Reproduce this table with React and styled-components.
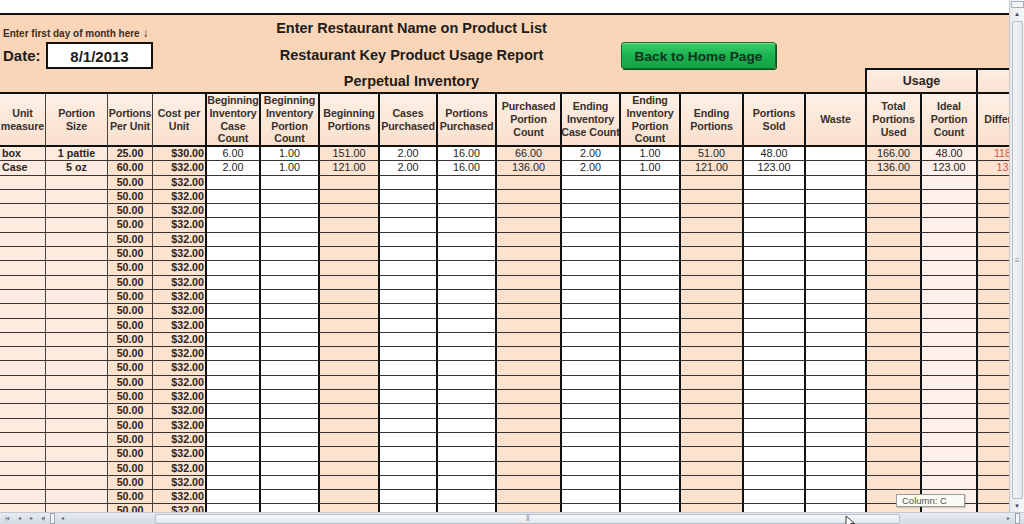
import React from "react";
import styled, { createGlobalStyle } from "styled-components";

const GlobalStyle = createGlobalStyle`
  html, body {
    margin: 0;
    padding: 0;
    background: #fff;
    overflow: hidden;
  }
  body {
    font-family: "Liberation Sans", Arial, sans-serif;
  }
`;

// column widths follow the sheet grid, last one runs under the scrollbar
const columns = [
  { w: 46, label: "Unit\nmeasure", tone: "light", edge: "thin", align: "left", bold: true },
  { w: 62, label: "Portion\nSize", tone: "light", edge: "thin", align: "center", bold: true },
  { w: 45, label: "Portions\nPer Unit", tone: "peach", edge: "thin", align: "center", bold: true },
  { w: 54, label: "Cost per\nUnit", tone: "peach", edge: "thick", align: "right", bold: true },
  { w: 54, label: "Beginning\nInventory\nCase\nCount", tone: "white", edge: "thick" },
  { w: 59, label: "Beginning\nInventory\nPortion\nCount", tone: "white", edge: "thick" },
  { w: 60, label: "Beginning\nPortions", tone: "peach", edge: "thick" },
  { w: 58, label: "Cases\nPurchased", tone: "white", edge: "thick" },
  { w: 59, label: "Portions\nPurchased", tone: "white", edge: "thick" },
  { w: 65, label: "Purchased\nPortion\nCount", tone: "peach", edge: "thick" },
  { w: 59, label: "Ending\nInventory\nCase Count", tone: "white", edge: "thick" },
  { w: 60, label: "Ending\nInventory\nPortion\nCount", tone: "white", edge: "thick" },
  { w: 63, label: "Ending\nPortions", tone: "peach", edge: "thick" },
  { w: 62, label: "Portions\nSold", tone: "white", edge: "thick" },
  { w: 61, label: "Waste", tone: "white", edge: "thick" },
  { w: 55, label: "Total\nPortions\nUsed", tone: "peach", edge: "thick" },
  { w: 56, label: "Ideal\nPortion\nCount", tone: "pink", edge: "thick" },
  { w: 64, label: "Difference", tone: "peach", edge: "none", red: true },
];

const template = columns.map((c) => `${c.w}px`).join(" ");

const rows = [
  ["box", "1 pattie", "25.00", "$30.00", "6.00", "1.00", "151.00", "2.00", "16.00", "66.00", "2.00", "1.00", "51.00", "48.00", "", "166.00", "48.00", "118.00"],
  ["Case", "5 oz", "60.00", "$32.00", "2.00", "1.00", "121.00", "2.00", "16.00", "136.00", "2.00", "1.00", "121.00", "123.00", "", "136.00", "123.00", "13.00"],
  ...Array.from({ length: 24 }, () => ["", "", "50.00", "$32.00", ...Array(14).fill("")]),
];

const tones = {
  light: "#fcebde",
  peach: "#fbe3d0",
  white: "#ffffff",
  pink: "#fdefe9",
};

const edges = {
  thin: "1px solid #4a4440",
  thick: "2px solid #111",
  none: "none",
};

export default function App() {
  return (
    <Window>
      <GlobalStyle />
      <Main>
        <Sheet>
          <TopStrip />
          <TitleArea>
            <Hint>
              Enter first day of month here <HintArrow>↓</HintArrow>
            </Hint>
            <Title $row={1}>Enter Restaurant Name on Product List</Title>
            <DateLabel>Date:</DateLabel>
            <DateBox>8/1/2013</DateBox>
            <Title $row={2}>Restaurant Key Product Usage Report</Title>
            <HomeButton>Back to Home Page</HomeButton>
            <Title $row={3}>Perpetual Inventory</Title>
            <UsageBox>Usage</UsageBox>
            <SpareBox />
          </TitleArea>
          <Table>
            {columns.map((c, i) => (
              <HeadCell key={i} $edge={c.edge}>
                {c.label}
              </HeadCell>
            ))}
            {rows.map((row, r) =>
              row.map((v, i) => (
                <Cell
                  key={`${r}-${i}`}
                  $tone={columns[i].tone}
                  $edge={columns[i].edge}
                  $align={columns[i].align || "center"}
                  $bold={columns[i].bold}
                  $red={columns[i].red}
                >
                  {v}
                </Cell>
              ))
            )}
          </Table>
        </Sheet>
        <VScroll>
          <SplitBox />
          <ArrowBtn>▲</ArrowBtn>
          <VThumb>
            <Grip>≡</Grip>
          </VThumb>
          <ArrowBtn>▼</ArrowBtn>
        </VScroll>
      </Main>
      <HBar>
        <NavGroup>
          <NavGlyph>|◂</NavGlyph>
          <NavGlyph>◂</NavGlyph>
          <NavGlyph>▸</NavGlyph>
          <NavGlyph>▸|</NavGlyph>
        </NavGroup>
        <TabSplit />
        <NavGlyph>◂</NavGlyph>
        <TabSpace />
        <HThumb>
          <Grip>⦀</Grip>
        </HThumb>
        <HRest />
        <NavGlyph>▸</NavGlyph>
        <TabSplit />
      </HBar>
      <Tooltip>Column: C</Tooltip>
      <Cursor width="12" height="12" viewBox="0 0 12 12">
        <path d="M1 0 L1 11 L4 8 L6.5 12 L8 11.3 L5.6 7.4 L9.5 7.4 Z" fill="#fff" stroke="#222" strokeWidth="0.9" />
      </Cursor>
    </Window>
  );
}

const Window = styled.div`
  position: relative;
  width: 1024px;
  height: 524px;
  overflow: hidden;
  display: flex;
  flex-direction: column;
  background: #fff;
`;

const Main = styled.div`
  display: flex;
  height: 512px;
`;

const Sheet = styled.div`
  width: 1009px;
  overflow: hidden;
  display: flex;
  flex-direction: column;
`;

const TopStrip = styled.div`
  height: 13px;
  flex-shrink: 0;
  background: #fff;
  border-bottom: 2px solid #111;
`;

const TitleArea = styled.div`
  display: grid;
  grid-template-columns: ${template};
  grid-template-rows: 26px 27px 24px;
  flex-shrink: 0;
  background: #fad5b8;
  color: #211c19;
`;

const Hint = styled.div`
  grid-column: 1 / 5;
  grid-row: 1;
  align-self: end;
  padding: 0 0 2px 3px;
  font-size: 10px;
  font-weight: 700;
  color: #3a2c24;
  white-space: nowrap;
`;

const HintArrow = styled.span`
  font-size: 12px;
  line-height: 10px;
`;

const Title = styled.div`
  grid-column: 6 / 11;
  grid-row: ${(p) => p.$row};
  align-self: center;
  justify-self: center;
  white-space: nowrap;
  font-size: 14.5px;
  font-weight: 700;
  margin-top: ${(p) => (p.$row === 3 ? "2px" : "0")};
`;

const DateLabel = styled.div`
  grid-column: 1;
  grid-row: 2;
  align-self: center;
  padding: 2px 0 0 3px;
  font-size: 15px;
  font-weight: 700;
`;

const DateBox = styled.div`
  grid-column: 2 / 4;
  grid-row: 2;
  box-sizing: border-box;
  margin-top: 1px;
  height: 27px;
  padding-top: 1px;
  border: 2px solid #111;
  background: #fff;
  display: flex;
  align-items: center;
  justify-content: center;
  font-size: 15px;
  font-weight: 700;
`;

const HomeButton = styled.button`
  grid-column: 12 / 15;
  grid-row: 2;
  justify-self: start;
  box-sizing: border-box;
  margin-top: 1px;
  width: 155px;
  height: 27px;
  padding: 1px 0 0;
  border: 1px solid #0c6b2d;
  border-radius: 3px;
  background: linear-gradient(180deg, #3ccf6a 0%, #1db452 45%, #13a245 100%);
  box-shadow: 1px 1px 0 #0b5424, inset 0 1px 0 rgba(255, 255, 255, 0.35);
  font-family: "Liberation Sans", Arial, sans-serif;
  font-size: 13.7px;
  font-weight: 700;
  color: #10331c;
  cursor: pointer;
`;

const UsageBox = styled.div`
  grid-column: 16 / 18;
  grid-row: 3;
  margin-left: -2px;
  border: 2px solid #111;
  border-bottom: none;
  background: linear-gradient(180deg, #fdeee3 0%, #fbe3d2 100%);
  display: flex;
  align-items: center;
  justify-content: center;
  font-size: 12.5px;
  font-weight: 700;
  color: #2a2522;
`;

const SpareBox = styled.div`
  grid-column: 18;
  grid-row: 3;
  border-top: 2px solid #111;
  background: linear-gradient(180deg, #fdeee3 0%, #fbe3d2 100%);
`;

const Table = styled.div`
  display: grid;
  grid-template-columns: ${template};
  grid-auto-rows: 14.3px;
  grid-template-rows: 53px;
  border-top: 2px solid #111;
  width: max-content;
`;

const HeadCell = styled.div`
  box-sizing: border-box;
  display: flex;
  align-items: center;
  justify-content: center;
  text-align: center;
  white-space: pre;
  font-size: 10.7px;
  line-height: 12.7px;
  font-weight: 700;
  letter-spacing: -0.1px;
  color: #38302c;
  background: linear-gradient(180deg, #fdf0e6 0%, #fae0cc 100%);
  border-right: ${(p) => edges[p.$edge]};
  border-bottom: 2px solid #111;
  overflow: hidden;
`;

const Cell = styled.div`
  box-sizing: border-box;
  background: ${(p) => tones[p.$tone]};
  border-right: ${(p) => edges[p.$edge]};
  border-bottom: 1px solid #3a3532;
  text-align: ${(p) => p.$align};
  padding: ${(p) => (p.$align === "left" ? "0 0 0 2px" : p.$align === "right" ? "0 1px 0 0" : "0")};
  font-size: ${(p) => (p.$bold ? "10.7px" : "10.8px")};
  font-weight: ${(p) => (p.$bold ? 700 : 400)};
  line-height: 13.3px;
  color: ${(p) => (p.$red ? "#d4544c" : p.$bold ? "#2b2420" : "#262626")};
  white-space: nowrap;
  overflow: hidden;
`;

const VScroll = styled.div`
  width: 15px;
  box-sizing: border-box;
  border-left: 1px solid #c3c9d1;
  background: linear-gradient(90deg, #e9ecef, #f4f5f7);
  display: flex;
  flex-direction: column;
  align-items: center;
`;

const SplitBox = styled.div`
  width: 11px;
  height: 5px;
  margin-top: 1px;
  border: 1px solid #a9b0ba;
  background: #f3f4f6;
`;

const ArrowBtn = styled.div`
  height: 12px;
  font-size: 6px;
  line-height: 12px;
  color: #3c4450;
`;

const VThumb = styled.div`
  flex: 1;
  width: 11px;
  box-sizing: border-box;
  margin: 1px 0;
  border: 1px solid #b8bfc8;
  border-radius: 2px;
  background: linear-gradient(90deg, #f2f3f5, #e4e7eb);
  display: flex;
  align-items: center;
  justify-content: center;
`;

const Grip = styled.span`
  font-size: 8px;
  color: #8a929c;
`;

const HBar = styled.div`
  height: 12px;
  display: flex;
  align-items: center;
  background: linear-gradient(180deg, #e6ebf1 0%, #d3dae3 100%);
  border-top: 1px solid #c2c9d2;
  box-sizing: border-box;
`;

const NavGroup = styled.div`
  display: flex;
  gap: 6px;
  padding-left: 3px;
`;

const NavGlyph = styled.span`
  font-size: 6px;
  line-height: 11px;
  color: #5a6472;
  letter-spacing: -1px;
  padding: 0 2px;
`;

const TabSplit = styled.div`
  width: 3px;
  height: 9px;
  margin: 0 4px;
  border: 1px solid #9aa3ae;
  background: #f5f6f8;
`;

const TabSpace = styled.div`
  width: 90px;
`;

const HThumb = styled.div`
  width: 745px;
  height: 10px;
  box-sizing: border-box;
  border: 1px solid #b5bdc7;
  border-radius: 2px;
  background: linear-gradient(180deg, #f6f7f9, #e3e7ec);
  display: flex;
  align-items: center;
  justify-content: center;
`;

const HRest = styled.div`
  flex: 1;
`;

const Tooltip = styled.div`
  position: absolute;
  left: 896px;
  top: 494px;
  width: 69px;
  height: 13px;
  box-sizing: border-box;
  padding-left: 5px;
  border: 1px solid #9c9c9c;
  background: #fbfbf6;
  box-shadow: 1px 1px 1px rgba(0, 0, 0, 0.15);
  font-size: 9.5px;
  line-height: 11px;
  color: #555;
`;

const Cursor = styled.svg`
  position: absolute;
  left: 845px;
  top: 516px;
`;
